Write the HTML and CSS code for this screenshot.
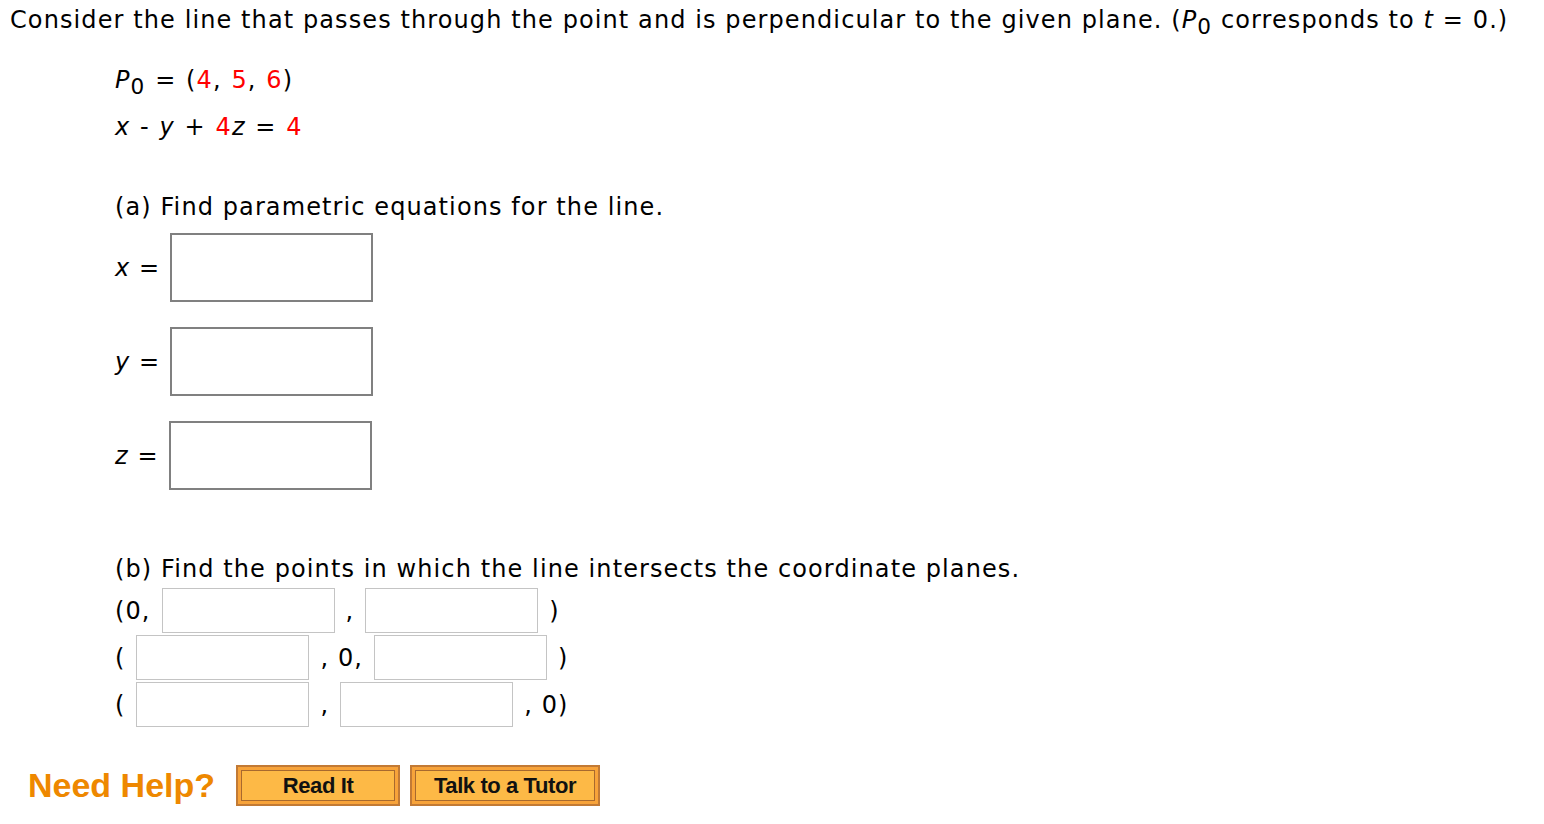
FILE: index.html
```html
<!DOCTYPE html>
<html>
<head>
<meta charset="utf-8">
<link rel="stylesheet" href="styles.css">
</head>
<body>
<div class="page">
  <p class="intro">Consider the line that passes through the point and is perpendicular to the given plane. (<i>P</i><sub class="sub">0</sub> corresponds to <i>t</i> = 0.)</p>
  <div class="content">
    <div class="given">
      <div class="line"><i>P</i><sub class="sub">0</sub> = (<span class="red">4</span>, <span class="red">5</span>, <span class="red">6</span>)</div>
      <div class="line"><i>x</i> - <i>y</i> + <span class="red">4</span><i>z</i> = <span class="red">4</span></div>
    </div>
    <div class="part-a">
      <div class="line">(a) Find parametric equations for the line.</div>
      <div class="eq"><span class="lbl"><i>x</i> =</span><input class="big" type="text"></div>
      <div class="eq"><span class="lbl"><i>y</i> =</span><input class="big" type="text"></div>
      <div class="eq"><span class="lbl"><i>z</i> =</span><input class="big" type="text"></div>
    </div>
    <div class="part-b">
      <div class="line">(b) Find the points in which the line intersects the coordinate planes.</div>
      <div class="pt"><span>(0,</span><input class="small" type="text"><span>,</span><input class="small" type="text"><span>)</span></div>
      <div class="pt"><span>(</span><input class="small" type="text"><span>, 0,</span><input class="small" type="text"><span>)</span></div>
      <div class="pt"><span>(</span><input class="small" type="text"><span>,</span><input class="small" type="text"><span>, 0)</span></div>
    </div>
  </div>
  <div class="help">
    <span class="need">Need Help?</span>
    <button class="hbtn"><span class="hin hin-read">Read It</span></button>
    <button class="hbtn"><span class="hin hin-tutor">Talk to a Tutor</span></button>
  </div>
</div>
</body>
</html>
```
FILE: styles.css
```css
html, body {
  margin: 0;
  padding: 0;
  background: #ffffff;
}
.page {
  font-family: "DejaVu Sans", Verdana, sans-serif;
  font-size: 24px;
  letter-spacing: 1.1px;
  color: #000;
  padding: 7px 0 0 10px;
}
.intro {
  margin: 0;
  line-height: 26px;
}
.sub {
  font-size: 0.9em;
  vertical-align: -0.28em;
  line-height: 0;
}
.red { color: #ff0000; }
.content {
  margin-left: 105px;
}
.line {
  line-height: 26px;
}
.given {
  margin-top: 34px;
  display: flex;
  flex-direction: column;
  gap: 21px;
  word-spacing: 1px;
}
.part-a {
  margin-top: 54px;
  display: flex;
  flex-direction: column;
}
.eq {
  display: flex;
  align-items: center;
  margin-top: 13px;
}
.eq + .eq { margin-top: 25px; }
.lbl {
  margin-right: 10px;
}
input.big {
  width: 199px;
  height: 65px;
  border: 2px solid #808080;
  padding: 0;
  margin: 0;
  box-sizing: content-box;
  background: #fff;
}
.part-b {
  margin-top: 66px;
  display: flex;
  flex-direction: column;
}
.pt {
  display: flex;
  align-items: center;
  margin-top: 2px;
}
.part-b .line + .pt { margin-top: 6px; }
input.small {
  width: 171px;
  height: 43px;
  border: 1px solid #c4c4c4;
  padding: 0;
  margin: 0 11px 0 11px;
  box-sizing: content-box;
  background: #fff;
}
.help {
  display: flex;
  align-items: center;
  margin-top: 38px;
  margin-left: 18px;
  letter-spacing: 0;
}
.need {
  font-family: "Liberation Sans", Arial, sans-serif;
  font-weight: bold;
  font-size: 34px;
  color: #ee8800;
  margin-right: 21px;
}
.hbtn {
  padding: 3px;
  margin: 0 10px 0 0;
  border: 2px solid #c27a35;
  background: #f7a33a;
  cursor: pointer;
}
.hin {
  display: block;
  border: 1px solid #a8692e;
  background: #fdb946;
  font-family: "Liberation Sans", Arial, sans-serif;
  font-weight: bold;
  font-size: 22px;
  color: #111;
  height: 29px;
  line-height: 30px;
  letter-spacing: -0.4px;
}
.hin-read { width: 152px; }
.hin-tutor { width: 178px; }
```
